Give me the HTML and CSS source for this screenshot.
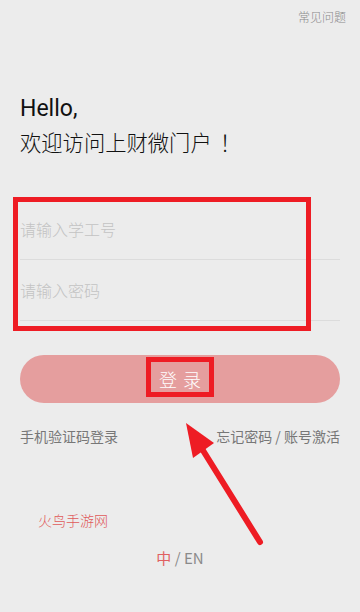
FILE: index.html
```html
<!DOCTYPE html>
<html lang="zh-CN">
<head>
  <meta charset="UTF-8">
  <title>上财微门户</title>
  <link rel="stylesheet" href="styles.css">
</head>
<body>
  <div class="page">
    <div class="top-bar"><a class="faq">常见问题</a></div>

    <h1 class="greeting">
      <span class="hello">Hello,</span>
      <span class="welcome">欢迎访问上财微门户<span class="bang">！</span></span>
    </h1>

    <form class="login-form">
      <div class="field"><input type="text" placeholder="请输入学工号"></div>
      <div class="field"><input type="password" placeholder="请输入密码"></div>
      <button type="button" class="login-btn">登录</button>
    </form>

    <div class="links">
      <span>手机验证码登录</span>
      <span>忘记密码 / 账号激活</span>
    </div>

    <div class="watermark">火鸟手游网</div>

    <div class="lang"><span class="lang-on">中</span> / EN</div>
  </div>

  <!-- annotation overlay -->
  <div class="mark mark-fields"></div>
  <div class="mark mark-btn"></div>
  <svg class="arrow" width="360" height="612" viewBox="0 0 360 612">
    <line x1="260" y1="542" x2="199" y2="444" stroke="#ee1c24" stroke-width="6" stroke-linecap="round"/>
    <polygon points="186,423 214,443 193,458" fill="#ee1c24"/>
  </svg>
</body>
</html>
```

FILE: styles.css
```css
body {
  margin: 0;
  background: #ececec;
  font-family: "Noto Sans CJK SC", "Noto Sans", sans-serif;
  font-weight: 300;
  color: #222;
  position: relative;
  width: 360px;
  height: 612px;
  overflow: hidden;
}

.page {
  padding: 0 20px;
}

.top-bar {
  height: 32px;
  display: flex;
  justify-content: flex-end;
  align-items: center;
  margin-right: -6px;
}

.faq {
  font-size: 12px;
  color: #8a8a8a;
}

.greeting {
  margin: 59px 0 0;
  font-weight: 300;
  color: #111;
}

.hello {
  display: block;
  font-family: Roboto, "Noto Sans CJK SC", sans-serif;
  font-weight: 400;
  font-size: 23px;
  line-height: 36px;
}

.welcome {
  display: block;
  font-size: 21.3px;
  line-height: 30px;
}

.bang {
  margin-left: 8px;
}

.login-form {
  margin-top: 42px;
}

.field {
  height: 60px;
  border-bottom: 1px solid #dcdcdc;
  display: flex;
  align-items: center;
}

.field input {
  width: 100%;
  border: none;
  background: transparent;
  padding: 0;
  font-family: inherit;
  font-weight: 300;
  font-size: 16px;
  outline: none;
}

.field input::placeholder {
  color: #c3c3c3;
}

.login-btn {
  display: block;
  width: 100%;
  height: 48px;
  margin-top: 34px;
  border: none;
  border-radius: 24px;
  background: #e59e9e;
  color: #fff;
  font-family: inherit;
  font-weight: 300;
  font-size: 18px;
  letter-spacing: 6px;
  text-indent: 6px;
}

.links {
  display: flex;
  justify-content: space-between;
  margin-top: 23px;
  font-size: 14px;
  font-weight: 400;
  line-height: 20px;
  color: #777;
}

.watermark {
  margin: 64px 0 0 18px;
  font-size: 14px;
  line-height: 20px;
  color: #e05a5a;
}

.lang {
  margin-top: 18px;
  text-align: center;
  font-size: 15px;
  font-weight: 400;
  line-height: 20px;
  color: #8a8a8a;
}

.lang-on {
  color: #e06060;
}

.mark {
  position: absolute;
  border: 5px solid #ee1c24;
  box-sizing: border-box;
}

.mark-fields {
  left: 13px;
  top: 197px;
  width: 298px;
  height: 134px;
}

.mark-btn {
  left: 146px;
  top: 357px;
  width: 68px;
  height: 40px;
}

.arrow {
  position: absolute;
  left: 0;
  top: 0;
}
```
